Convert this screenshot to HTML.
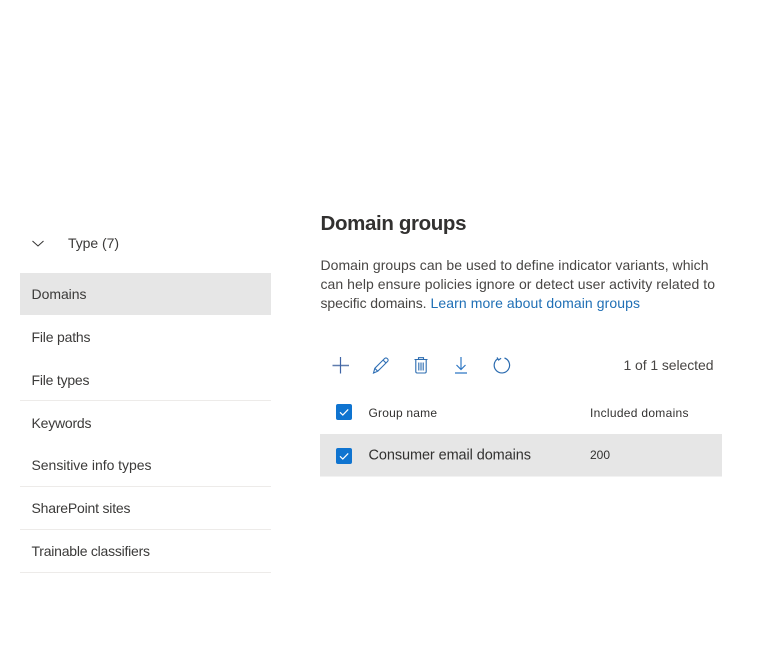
<!DOCTYPE html>
<html lang="en"><head><meta charset="utf-8"><title>Domain groups</title>
<style>
html,body{margin:0;padding:0;background:#fff;width:768px;height:665px;overflow:hidden}
svg{display:block}
text{font-family:"Liberation Sans",Arial,sans-serif;fill:#323130}
.nav{font-size:14px;fill:#3b3a39}
.p{font-size:14px;fill:#484644}
</style></head><body>
<svg width="768" height="665" viewBox="0 0 768 665" xmlns="http://www.w3.org/2000/svg">
<rect width="768" height="665" fill="#fff"/>
<!-- left nav -->
<path d="M32.500 241l5.500 5 5.500-5" fill="none" stroke="#323130" stroke-width="1"/>
<text x="68" y="248" class="nav" textLength="51" lengthAdjust="spacing">Type (7)</text>
<rect x="20" y="273" width="251" height="42" fill="#e6e6e6"/>
<text x="31.500" y="299" class="nav" textLength="55" lengthAdjust="spacing">Domains</text>
<text x="31.500" y="342" class="nav" textLength="59" lengthAdjust="spacing">File paths</text>
<text x="31.500" y="385" class="nav" textLength="58" lengthAdjust="spacing">File types</text>
<rect x="20" y="400" width="251" height="1" fill="#edebe9"/>
<text x="31.500" y="428" class="nav" textLength="60" lengthAdjust="spacing">Keywords</text>
<text x="31.500" y="470" class="nav" textLength="120" lengthAdjust="spacing">Sensitive info types</text>
<rect x="20" y="486" width="251" height="1" fill="#edebe9"/>
<text x="31.500" y="513" class="nav" textLength="99" lengthAdjust="spacing">SharePoint sites</text>
<rect x="20" y="529" width="251" height="1" fill="#edebe9"/>
<text x="31.500" y="556" class="nav" textLength="118.500" lengthAdjust="spacing">Trainable classifiers</text>
<rect x="20" y="572" width="251" height="1" fill="#edebe9"/>
<!-- heading -->
<text x="320.500" y="230" font-size="20.500" font-weight="700" textLength="146" lengthAdjust="spacing">Domain groups</text>
<text x="320.500" y="270" class="p" textLength="388" lengthAdjust="spacing">Domain groups can be used to define indicator variants, which</text>
<text x="320.500" y="289" class="p" textLength="394.500" lengthAdjust="spacing">can help ensure policies ignore or detect user activity related to</text>
<text x="320.500" y="308" class="p" textLength="106" lengthAdjust="spacing">specific domains.</text>
<text x="430.500" y="308" class="p" style="fill:#1f6fb5" textLength="209.500" lengthAdjust="spacing">Learn more about domain groups</text>
<!-- toolbar icons -->
<path d="M332.500 365.500h16.500" fill="none" stroke="#5f7cae" stroke-width="1.600"/>
<path d="M340.500 357v16.500" fill="none" stroke="#3f64a6" stroke-width="1.200"/>
<path d="M373.500 373l1.300-4.700 9.800-9.800c.8-.8 1.900-.8 2.600 0l.4.400c.7.700.7 1.800 0 2.500l-9.800 9.800zM383 360l3.300 3.300M374.800 368.300l3 3" fill="none" stroke="#2f6fb5" stroke-width="1.100"/>
<path d="M414.500 359.500h13M418.500 359.500v-1.800h5v1.800M415.800 359.500v12c0 .9.500 1.500 1.300 1.500h7.800c.8 0 1.300-.6 1.300-1.500v-12M418.800 362.500v8M421 362.500v8M423.200 362.500v8" fill="none" stroke="#2c6cb0" stroke-width="1.100"/>
<path d="M461 357v12.500M456.500 365l4.500 4.500 4.500-4.500M455 373h12" fill="none" stroke="#2f78c4" stroke-width="1.200"/>
<path d="M498 358.600a7.700 7.700 0 1 0 6.500-.6M497 357.500l1.600 2.500 2.500-1.700" fill="none" stroke="#2c6cb0" stroke-width="1.200"/>
<text x="713.500" y="370" class="p" text-anchor="end" textLength="90" lengthAdjust="spacing">1 of 1 selected</text>
<!-- table -->
<rect x="336" y="404" width="16" height="16" rx="2" fill="#0f74d0"/>
<path d="M340 412.300l2.800 2.700 5.400-5.600" fill="none" stroke="#fff" stroke-width="1.200"/>
<text x="368.500" y="417" font-size="12" textLength="68.500" lengthAdjust="spacing">Group name</text>
<text x="590" y="417" font-size="12" textLength="98.500" lengthAdjust="spacing">Included domains</text>
<rect x="320" y="434" width="402" height="42.500" fill="#e6e6e6"/>
<rect x="336" y="448" width="16" height="16" rx="2" fill="#0f74d0"/>
<path d="M340 456.300l2.800 2.700 5.400-5.600" fill="none" stroke="#fff" stroke-width="1.200"/>
<text x="368.500" y="459.500" font-size="14.500" textLength="162.500" lengthAdjust="spacing">Consumer email domains</text>
<text x="590" y="459" font-size="12" textLength="20" lengthAdjust="spacing">200</text>
</svg>
</body></html>
